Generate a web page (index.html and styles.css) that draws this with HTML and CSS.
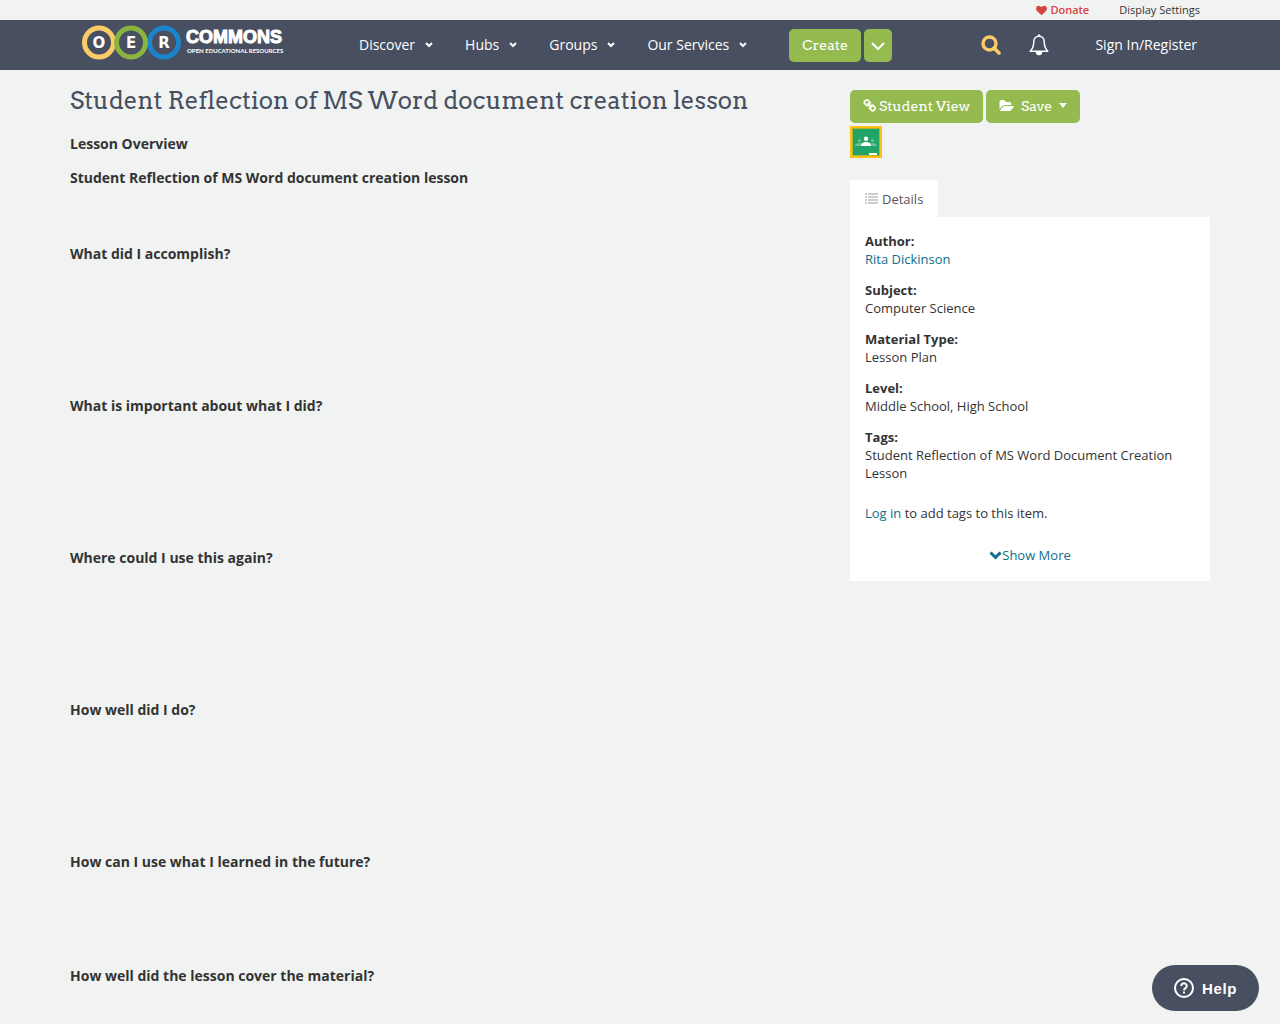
FILE: index.html
```html
<!DOCTYPE html>
<html lang="en">
<head>
    <meta charset="UTF-8">
    <meta name="viewport" content="width=device-width, initial-scale=1.0">
    <title>Student Reflection of MS Word document creation lesson | OER Commons</title>
    <link rel="stylesheet" href="styles.css">
</head>
<body>
    <div class="top-bar">
        <div class="container top-links">
            <a href="#" class="donate">
                <svg width="11" height="11" viewBox="0 0 1792 1792" fill="currentColor" aria-hidden="true"><path d="M896 1664q-26 0-44-18l-624-602q-10-8-27.500-26T145 952.500 77 855 23.500 734 0 596q0-220 127-344t351-124q62 0 126.500 21.500t120 58T820 276t76 68q36-36 76-68t95.500-68.500 120-58T1314 128q224 0 351 124t127 344q0 221-229 450l-623 600q-18 18-44 18z"/></svg>
                Donate
            </a>
            <a href="#">Display Settings</a>
        </div>
    </div>

    <header class="header">
        <div class="container header-inner">
            <a href="#" class="logo" aria-label="OER Commons">
                <svg width="204" height="36" viewBox="0 0 204 36">
                    <g fill="none" stroke-width="5">
                        <circle cx="17" cy="17.500" r="14.500" stroke="#fbcb68"/>
                        <circle cx="82" cy="17.500" r="14.500" stroke="#1c84cb"/>
                        <circle cx="49" cy="17.500" r="14.500" stroke="#8ab33f"/>
                    </g>
                    <g class="logo-letters">
                        <text x="17" y="23">O</text>
                        <text x="49" y="23">E</text>
                        <text x="82" y="23">R</text>
                    </g>
                    <text class="logo-name" x="104" y="18">COMMONS</text>
                    <text class="logo-tagline" x="105" y="28"><tspan class="logo-open">OPEN</tspan> EDUCATIONAL RESOURCES</text>
                </svg>
            </a>

            <nav class="main-nav">
                <a href="#">Discover <svg class="caret" width="8" height="6" viewBox="0 0 8 6"><path d="M1 1l3 3 3-3"/></svg></a>
                <a href="#">Hubs <svg class="caret" width="8" height="6" viewBox="0 0 8 6"><path d="M1 1l3 3 3-3"/></svg></a>
                <a href="#">Groups <svg class="caret" width="8" height="6" viewBox="0 0 8 6"><path d="M1 1l3 3 3-3"/></svg></a>
                <a href="#">Our Services <svg class="caret" width="8" height="6" viewBox="0 0 8 6"><path d="M1 1l3 3 3-3"/></svg></a>
            </nav>

            <div class="create">
                <button type="button" class="btn">Create</button>
                <button type="button" class="btn btn-toggle" aria-label="More create options">
                    <svg width="14" height="9" viewBox="0 0 14 9"><path d="M1 1l6 6 6-6"/></svg>
                </button>
            </div>

            <div class="user-nav">
                <button type="button" class="icon-btn" aria-label="Search">
                    <svg width="20" height="20" viewBox="0 0 20 20" fill="none" stroke="#fbcb68"><circle cx="8.500" cy="8.500" r="6.500" stroke-width="3.400"/><path d="M13 13l5 5" stroke-width="3.600" stroke-linecap="round"/></svg>
                </button>
                <button type="button" class="icon-btn" aria-label="Notifications">
                    <svg width="20" height="22" viewBox="0 0 20 22" fill="none" stroke="#fff" stroke-width="1.500" stroke-linejoin="round"><path d="M10 2.300c-3.300 0-5.200 2.400-5.200 5.300 0 5-1.300 7.500-3.600 9.600h17.600c-2.300-2.100-3.600-4.600-3.600-9.600 0-2.900-1.900-5.300-5.200-5.300z"/><path d="M8.800 1.500h2.400" stroke-width="2"/><path d="M7.500 18a2.500 2.500 0 0 0 5 0z" fill="#fff"/></svg>
                </button>
                <a href="#" class="sign-in">Sign In/Register</a>
            </div>
        </div>
    </header>

    <div class="container page">
        <main class="content">
            <h1>Student Reflection of MS Word document creation lesson</h1>
            <h2>Lesson Overview</h2>
            <div class="lesson">
                <p class="intro">Student Reflection of MS Word document creation lesson</p>
                <p class="question">What did I accomplish?</p>
                <p class="question">What is important about what I did?</p>
                <p class="question">Where could I use this again?</p>
                <p class="question">How well did I do?</p>
                <p class="question short">How can I use what I learned in the future?</p>
                <p>How well did the lesson cover the material?</p>
            </div>
        </main>

        <aside class="sidebar">
            <div class="actions">
                <button type="button" class="btn">
                    <svg width="13" height="13" viewBox="0 0 1712 1712" fill="currentColor" stroke="currentColor" stroke-width="60"><path d="M1520 1216q0-40-28-68l-208-208q-28-28-68-28-42 0-72 32 3 3 19 18.500t21.500 21.500 15 19 13 25.500 3.500 27.500q0 40-28 68t-68 28q-15 0-27.500-3.500t-25.500-13-19-15-21.500-21.500-18.500-19q-33 31-33 73 0 40 28 68l206 207q27 27 68 27 40 0 68-26l147-146q28-28 28-67zm-703-705q0-40-28-68l-206-207q-28-28-68-28-39 0-68 27l-147 146q-28 28-28 67 0 40 28 68l208 208q27 27 68 27 42 0 72-31-3-3-19-18.500t-21.500-21.500-15-19-13-25.500-3.500-27.500q0-40 28-68t68-28q15 0 27.500 3.500t25.500 13 19 15 21.500 21.500 18.500 19q33-31 33-73zm895 705q0 120-85 203l-147 146q-83 83-203 83-121 0-204-85l-206-207q-83-83-83-203 0-123 88-209l-88-88q-86 88-208 88-120 0-204-84l-208-208q-84-84-84-204t85-203l147-146q83-83 203-83 121 0 204 85l206 207q83 83 83 203 0 123-88 209l88 88q86-88 208-88 120 0 204 84l208 208q84 84 84 204z"/></svg>
                    Student View
                </button>
                <button type="button" class="btn btn-save">
                    <svg width="15" height="14" viewBox="0 0 1943 1792" fill="currentColor"><path d="M1943 952q0 31-31 66l-336 396q-43 51-120.500 86.500t-143.500 35.500h-1088q-34 0-60.500-13t-26.500-43q0-31 31-66l336-396q43-51 120.500-86.500t143.500-35.500h1088q34 0 60.500 13t26.500 43zm-343-344v160h-832q-94 0-197 47.500t-164 119.500l-337 396-5 6q0-4-.5-12.500t-.5-12.500v-960q0-92 66-158t158-66h320q92 0 158 66t66 158v32h544q92 0 158 66t66 158z"/></svg>
                    Save
                    <svg width="8" height="5" viewBox="0 0 8 5" fill="currentColor"><path d="M0 0h8l-4 5z"/></svg>
                </button>
            </div>
            <a href="#" class="classroom" aria-label="Share to Google Classroom">
                <svg width="32" height="32" viewBox="0 0 32 32">
                    <path fill="#ffc112" d="M0 0h32v32H0z"/>
                    <path fill="#b5b52d" d="M2 2h28v28H2z"/>
                    <path fill="#21a465" d="M3 3h26v26H3z"/>
                    <g fill="#69c197"><circle cx="9.500" cy="14.500" r="1.600"/><circle cx="22.500" cy="14.500" r="1.600"/><path d="M5 20c0-2 2-3 4.500-3s4 1 4 3zM18.500 20c0-2 1.500-3 4-3s4.500 1 4.500 3z"/></g>
                    <g fill="#fff"><circle cx="16" cy="12.700" r="2.200"/><path d="M11 20c0-3 2.200-4 5-4s5 1 5 4zM19 27h8v2h-8z"/></g>
                </svg>
            </a>

            <div class="tabs">
                <a href="#details" class="tab">
                    <svg width="13" height="11" viewBox="0 0 13 11" fill="#ccc"><path d="M0 0h2v2H0zM3 0h10v2H3zM0 3h2v2H0zM3 3h10v2H3zM0 6h2v2H0zM3 6h10v2H3zM0 9h2v2H0zM3 9h10v2H3z"/></svg>
                    Details
                </a>
            </div>
            <div class="panel" id="details">
                <dl>
                    <dt>Author:</dt>
                    <dd><a href="#">Rita Dickinson</a></dd>
                    <dt>Subject:</dt>
                    <dd>Computer Science</dd>
                    <dt>Material Type:</dt>
                    <dd>Lesson Plan</dd>
                    <dt>Level:</dt>
                    <dd>Middle School, High School</dd>
                    <dt>Tags:</dt>
                    <dd>Student Reflection of MS Word Document Creation Lesson</dd>
                </dl>
                <p class="login"><a href="#">Log in</a> to add tags to this item.</p>
                <a href="#" class="show-more"><svg width="13" height="9" viewBox="0 0 13 9"><path d="M1.500 1.500l5 5 5-5"/></svg>Show More</a>
            </div>
        </aside>
    </div>

    <button type="button" class="help">
        <svg width="20" height="20" viewBox="0 0 20 20" fill="none" stroke="#fff" stroke-width="2"><circle cx="10" cy="10" r="9"/><path d="M7.300 8a2.700 2.700 0 1 1 4.200 2.200c-1 .7-1.500 1.100-1.500 2.100"/><path d="M10 13.500v2"/></svg>
        Help
    </button>
</body>
</html>
```
FILE: styles.css
```css
* {
    box-sizing: border-box;
}

body {
    margin: 0;
    background-color: #f0f3f2;
    color: #333;
    font-family: "Open Sans", sans-serif;
    font-size: 13px;
    line-height: 18px;
}

a {
    color: #0f6d8e;
    text-decoration: none;
}

button {
    border: 0;
    cursor: pointer;
}

svg {
    flex-shrink: 0;
}

.container {
    max-width: 1140px;
    margin: 0 auto;
}

/* top bar */
.top-links {
    display: flex;
    justify-content: flex-end;
    gap: 30px;
    padding-right: 10px;
    font-size: 11px;
    line-height: 20px;
}

.top-links a {
    color: #333;
}

.top-links .donate {
    display: flex;
    align-items: center;
    gap: 3px;
    color: #d64541;
    font-weight: 600;
}

/* header */
.header {
    background-color: #484f60;
}

.header-inner {
    display: flex;
    align-items: center;
    height: 50px;
    padding: 0 13px 0 12px;
}

.logo {
    display: flex;
    padding-bottom: 5px;
}

.logo svg {
    overflow: visible;
}

.logo text {
    fill: #fff;
    font-family: "Liberation Sans", Arial, sans-serif;
}

.logo .logo-letters text {
    font-family: "DejaVu Sans", sans-serif;
    font-size: 15px;
    font-weight: bold;
    text-anchor: middle;
}

.logo .logo-name {
    font-size: 18px;
    font-weight: bold;
    stroke: #fff;
    stroke-width: 1px;
}

.logo .logo-tagline {
    font-family: Lato, "Liberation Sans", sans-serif;
    font-size: 7px;
    font-weight: bold;
    font-size: 6px;
}

.logo-open {
    font-weight: 900;
}

.main-nav {
    display: flex;
    gap: 32px;
    margin-left: 73px;
    font-size: 14px;
}

.main-nav a {
    display: flex;
    align-items: center;
    gap: 10px;
    color: #fff;
}

.caret,
.btn-toggle svg {
    fill: none;
    stroke: #fff;
    stroke-width: 2;
}

.create {
    display: flex;
    gap: 3px;
    margin-left: 42px;
}

.btn {
    display: flex;
    align-items: center;
    justify-content: center;
    gap: 3px;
    height: 33px;
    padding: 0 13px;
    border-radius: 5px;
    background-color: #95ba4f;
    color: #fff;
    font-family: Arvo, "DejaVu Serif", serif;
    font-size: 14px;
}

.btn-toggle {
    width: 28px;
    padding: 2px 0 0;
}

.user-nav {
    display: flex;
    align-items: center;
    gap: 28px;
    margin-left: auto;
}

.icon-btn {
    display: flex;
    padding: 0;
    background: none;
}

.sign-in {
    margin-left: 18px;
    color: #fff;
    font-size: 14px;
}

/* page */
.page {
    display: flex;
    gap: 30px;
    padding-top: 16px;
}

.content {
    flex: 1;
    font-size: 14px;
    font-weight: bold;
    line-height: 19px;
}

h1 {
    margin: 0 0 19px;
    color: #484f60;
    font-family: Arvo, "DejaVu Serif", serif;
    font-size: 24px;
    font-weight: normal;
    line-height: 29px;
}

h2 {
    margin: 0 0 15px;
    font-size: 14px;
}

.lesson p {
    margin: 0 0 19px;
}

.lesson .intro {
    margin-bottom: 57px;
}

/* room for the written answers */
.lesson .question {
    margin-bottom: 133px;
}

.lesson .short {
    margin-bottom: 95px;
}

/* sidebar */
.sidebar {
    width: 360px;
    padding-top: 4px;
}

.actions {
    display: flex;
    gap: 3px;
}

.actions .btn {
    padding-bottom: 2px;
}

.btn-save {
    gap: 7px;
}

.classroom {
    display: flex;
    margin: 3px 0 22px;
}

.tabs {
    display: flex;
}

.tab {
    display: flex;
    align-items: center;
    gap: 4px;
    height: 37px;
    padding: 0 15px;
    background-color: #fff;
    color: #555;
}

.panel {
    padding: 15px 15px 17px;
    background-color: #fff;
}

dl {
    margin: 0 0 22px;
}

dt {
    font-weight: bold;
}

dd {
    margin: 0 0 13px;
}

dd:last-child {
    margin-bottom: 0;
}

.login {
    margin: 0 0 24px;
}

.show-more {
    display: flex;
    align-items: center;
    justify-content: center;
}

.show-more svg {
    fill: none;
    stroke: currentColor;
    stroke-width: 3;
}

/* help button */
.help {
    position: fixed;
    right: 21px;
    bottom: 13px;
    display: flex;
    align-items: center;
    gap: 8px;
    height: 46px;
    padding: 0 22px;
    border-radius: 23px;
    background-color: #484f60;
    color: #fff;
    font-family: "Liberation Sans", Arial, sans-serif;
    font-size: 15px;
    font-weight: bold;
    letter-spacing: 0.6px;
}
```
